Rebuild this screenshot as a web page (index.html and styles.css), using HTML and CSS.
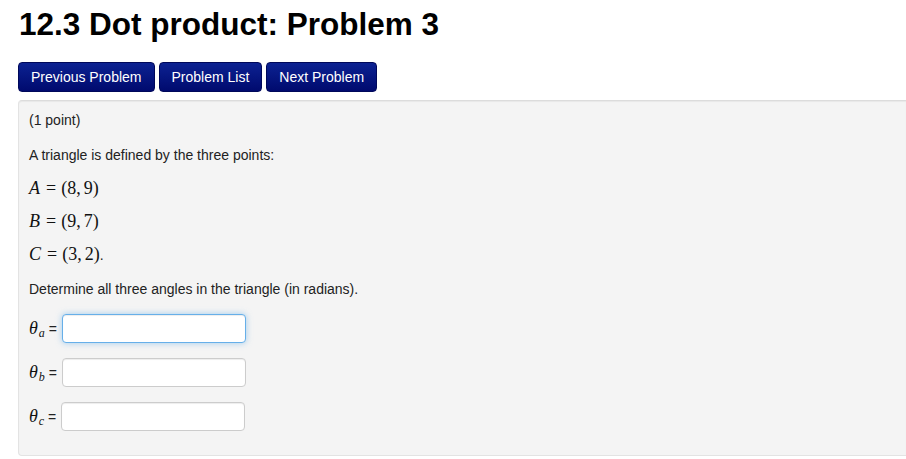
FILE: index.html
```html
<!DOCTYPE html>
<html lang="en">
<head>
    <meta charset="UTF-8">
    <title>12.3 Dot product: Problem 3</title>
    <link rel="stylesheet" href="styles.css">
</head>
<body>
    <h2 class="problem-title">12.3 Dot product: Problem 3</h2>

    <div class="nav-buttons">
        <a href="#" class="btn">Previous Problem</a>
        <a href="#" class="btn">Problem List</a>
        <a href="#" class="btn">Next Problem</a>
    </div>

    <div class="well">
        <p>(1 point)</p>
        <p class="intro">A triangle is defined by the three points:</p>

        <p class="math-line"><span class="math"><i>A</i><span class="rel">=</span>(8,<span class="thin"></span>9)</span></p>
        <p class="math-line"><span class="math"><i>B</i><span class="rel">=</span>(9,<span class="thin"></span>7)</span></p>
        <p class="math-line last"><span class="math"><i>C</i><span class="rel">=</span>(3,<span class="thin"></span>2)</span>.</p>

        <p>Determine all three angles in the triangle (in radians).</p>

        <div class="answer-row">
            <label for="ans-a"><span class="math"><i>θ</i><sub>a</sub></span> =</label>
            <input type="text" id="ans-a" class="answer active">
        </div>
        <div class="answer-row">
            <label for="ans-b"><span class="math"><i>θ</i><sub>b</sub></span> =</label>
            <input type="text" id="ans-b" class="answer">
        </div>
        <div class="answer-row">
            <label for="ans-c"><span class="math"><i>θ</i><sub>c</sub></span> =</label>
            <input type="text" id="ans-c" class="answer">
        </div>
    </div>
</body>
</html>
```

FILE: styles.css
```css
html, body {
    overflow: hidden;
}
body {
    font-family: "Liberation Sans", Arial, sans-serif;
    font-size: 14px;
    line-height: 20px;
    color: #222;
    background-color: #fff;
    margin: 0;
    padding: 0 0 0 18px;
}
.problem-title {
    font-size: 31.5px;
    font-weight: bold;
    line-height: 40px;
    color: #000;
    margin: 4px 0 18px 1px;
}
.nav-buttons {
    display: flex;
    gap: 4px;
    margin-bottom: 8px;
}
.btn {
    display: inline-block;
    padding: 4px 12px;
    font-size: 14px;
    line-height: 20px;
    color: #fff;
    text-decoration: none;
    background-image: linear-gradient(to bottom, #0c2292, #000a6e);
    border: 1px solid #00085a;
    border-radius: 4px;
}
.btn:hover {
    background-image: none;
    background-color: #000a6e;
}
/* runs off the right edge of the window, like the original page */
.well {
    width: 100%;
    box-sizing: border-box;
    padding: 9px 10px 9px 10px;
    background-color: #f4f4f4;
    border: 1px solid #e3e3e3;
    border-right: none;
    border-top-color: #dcdcdc;
    border-radius: 4px 0 0 4px;
    box-shadow: inset 0 1px 1px rgba(0, 0, 0, 0.05);
}
.well p {
    margin: 0 0 15px;
}
.well p.intro {
    margin-bottom: 14px;
}
.well p.math-line {
    height: 20px;
    margin-bottom: 13px;
}
.well p.math-line.last {
    margin-bottom: 14px;
}
.math {
    font-family: "Liberation Serif", "Times New Roman", serif;
    font-size: 18px;
    line-height: 1;
    color: #111;
}
.math i {
    font-style: italic;
}
.math .rel {
    margin: 0 5px 0 6px;
}
.math .thin {
    display: inline-block;
    width: 3px;
}
.math sub {
    font-style: italic;
    font-size: 12px;
    line-height: 0;
    vertical-align: -3px;
    margin-left: 1px;
}
.answer-row {
    display: flex;
    align-items: center;
    gap: 5px;
    height: 29px;
    margin-bottom: 15px;
}
.answer-row label {
    white-space: nowrap;
}
.answer {
    width: 184px;
    height: 29px;
    box-sizing: border-box;
    padding: 4px 6px;
    font-size: 14px;
    border: 1px solid #ccc;
    border-radius: 4px;
    background-color: #fff;
    box-shadow: inset 0 1px 1px rgba(0, 0, 0, 0.075);
}
.answer.active,
.answer:focus {
    border-color: #66afe9;
    outline: none;
    box-shadow: inset 0 1px 1px rgba(0, 0, 0, 0.075), 0 0 6px rgba(102, 175, 233, 0.6);
}
```
